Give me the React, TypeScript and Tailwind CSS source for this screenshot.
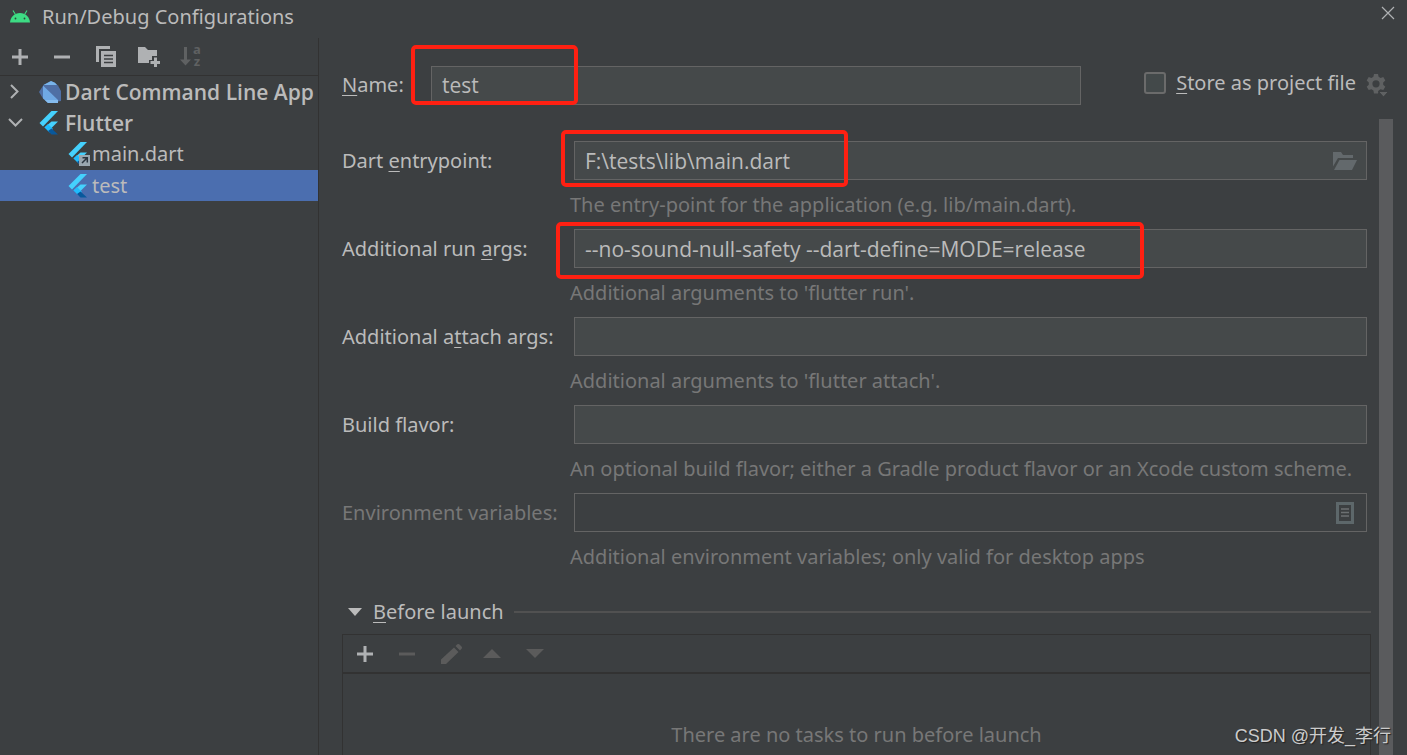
import React, { useState } from 'react';

interface FieldRow {
  id: string;
  label: React.ReactNode;
  value: string;
  hint: string;
  icon?: React.ReactNode;
  disabled?: boolean;
  mark?: string;
}

const Mnemonic = ({ children }: { children: React.ReactNode }) => (
  <span className="underline decoration-1 underline-offset-3">{children}</span>
);

const AndroidIcon = () => (
  <svg width="20" height="14" viewBox="0 0 20 14">
    <path d="M3 0.5L5.2 4M17 0.5L14.8 4" stroke="#3ddc84" strokeWidth="1.1" />
    <path d="M0 12.5C0.4 7 4.5 3 10 3s9.600 4 10 9.500z" fill="#3ddc84" />
    <circle cx="5.500" cy="8.500" r="0.900" fill="#2b4a38" />
    <circle cx="14.500" cy="8.500" r="0.900" fill="#2b4a38" />
  </svg>
);

const PlusIcon = () => (
  <svg width="16" height="16" viewBox="0 0 16 16" fill="currentColor">
    <path d="M6.500 0h3v6.500H16v3H9.500V16h-3V9.500H0v-3h6.500z" />
  </svg>
);

const MinusIcon = () => (
  <svg width="16" height="16" viewBox="0 0 16 16" fill="currentColor">
    <path d="M0 6.500h16v3H0z" />
  </svg>
);

const CopyIcon = () => (
  <svg width="20" height="21" viewBox="0 0 20 21">
    <path d="M0 0h14v3H3v13H0z" fill="#afb1b3" />
    <path d="M5 5h15v16H5z" fill="#afb1b3" />
    <path d="M8 9.500h9M8 13h9M8 16.500h9" stroke="#3c3f41" strokeWidth="1.400" />
  </svg>
);

const FolderPlusIcon = () => (
  <svg width="22" height="20" viewBox="0 0 22 20">
    <path d="M0 0h7l3 3h9v6h-5v4h-3v3H0z" fill="#afb1b3" />
    <path d="M16 10.500h3V14h3.500v3H19v3.500h-3V17h-3.500v-3H16z" fill="#afb1b3" />
  </svg>
);

const SortIcon = () => (
  <span className="flex items-center gap-[2px] text-[#5f6162]">
    <svg width="11" height="19" viewBox="0 0 11 19" fill="currentColor">
      <path d="M4 0h3v12.500h4L5.500 18.500 0 12.500h4z" />
    </svg>
    <span className="flex flex-col pb-1 text-[13px] font-bold leading-[12px]">
      <span>a</span>
      <span>z</span>
    </span>
  </span>
);

const DartIcon = () => (
  <svg className="shrink-0" width="22" height="22" viewBox="0 0 22 22">
    <path d="M4.500 4L12 0l3 1.500L19 4.500 22 10v10l-3 .5L4 17.500 0 11z" fill="#4f6fa5" />
    <path d="M4.500 4L12 0l4 1.700L18 4z" fill="#79b4ea" />
    <path d="M4 4.500L19 19v3H9l-5-4.500z" fill="#6fa8e4" />
    <path d="M6 19h13v3H9z" fill="#85bcee" />
  </svg>
);

const FlutterIcon = ({ linked }: { linked?: boolean }) => (
  <svg className="shrink-0" width="22" height="24" viewBox="0 0 22 24">
    <path d="M12.500 0H19L4 15.500.5 12z" fill="#45d1fd" />
    <path d="M12.500 10.500H19L10.500 19 5.500 16.500z" fill="#45d1fd" />
    <path d="M5.500 16.500L9 13l5 5-3.500 3.500z" fill="#1fbcfd" />
    <path d="M9 20l3.500-2.500L19 23.500h-6.500z" fill="#08589c" />
    {linked && (
      <>
        <path d="M11 13h11v11H11z" fill="#9aa7b0" />
        <path d="M14 21l5-5M14.500 15.700h4.800v4.800" fill="none" stroke="#2b3640" strokeWidth="1.500" />
      </>
    )}
  </svg>
);

const GearIcon = () => (
  <svg width="22" height="23" viewBox="0 0 22 23" fill="#5f6162">
    <path
      fillRule="evenodd"
      d="M8 0h4l.6 2.800 2 1.100 2.700-.9 2 3.400L17.200 8.500v2.300l2.100 2-2 3.300-2.700-.8-2 1.200L12 19.500H8l-.6-3-2-1.200-2.700.8-2-3.300 2.100-2V8.500L.7 6.400l2-3.400 2.700.9 2-1.100zM10 6.200a3.600 3.600 0 1 0 0 7.200 3.600 3.600 0 0 0 0-7.200z"
    />
    <path d="M12.500 17.500h10L17.500 23z" stroke="#3c3f41" strokeWidth="1" />
  </svg>
);

const OpenFolderIcon = () => (
  <svg width="24" height="18" viewBox="0 0 24 18" fill="#63696c">
    <path d="M0 0h8l2 3h10v3H5L0 14.500z" />
    <path d="M6.500 8H24l-5 10H1z" />
  </svg>
);

const ListIcon = () => (
  <svg width="18" height="22" viewBox="0 0 18 22">
    <path d="M1.500 1.500h15v19h-15z" fill="none" stroke="#5d676a" strokeWidth="3" />
    <path d="M5 7h8M5 10.500h8M5 14h8" stroke="#6c7072" strokeWidth="1.500" />
  </svg>
);

const PencilIcon = () => (
  <svg width="21" height="20" viewBox="0 0 21 20" fill="currentColor">
    <path d="M13 3.500l4.500 4.500L5 20H0v-4.500zM14.500 2L16 .5c.8-.7 1.700-.7 2.500 0L20.500 2.500c.7.8.7 1.500 0 2.300L19 6.500z" />
  </svg>
);

const Triangle = ({ up, wide }: { up?: boolean; wide?: boolean }) => (
  <svg width={wide ? 18 : 14} height={wide ? 9 : 8} viewBox="0 0 18 9" preserveAspectRatio="none" fill="currentColor">
    <path d={up ? 'M0 9L9 0l9 9z' : 'M0 0h18L9 9z'} />
  </svg>
);

const fields: FieldRow[] = [
  {
    id: 'entrypoint',
    label: <>Dart <Mnemonic>e</Mnemonic>ntrypoint:</>,
    value: 'F:\\tests\\lib\\main.dart',
    hint: 'The entry-point for the application (e.g. lib/main.dart).',
    icon: <OpenFolderIcon />,
    mark: '-left-[13px] -top-[11px] w-[287px]',
  },
  {
    id: 'run-args',
    label: <>Additional run <Mnemonic>a</Mnemonic>rgs:</>,
    value: '--no-sound-null-safety --dart-define=MODE=release',
    hint: "Additional arguments to 'flutter run'.",
    mark: '-left-[18px] -top-[7px] w-[588px]',
  },
  {
    id: 'attach-args',
    label: <>Additional a<Mnemonic>t</Mnemonic>tach args:</>,
    value: '',
    hint: "Additional arguments to 'flutter attach'.",
  },
  {
    id: 'flavor',
    label: 'Build flavor:',
    value: '',
    hint: 'An optional build flavor; either a Gradle product flavor or an Xcode custom scheme.',
  },
  {
    id: 'env',
    label: 'Environment variables:',
    value: '',
    hint: 'Additional environment variables; only valid for desktop apps',
    icon: <ListIcon />,
    disabled: true,
  },
];

const inputClass =
  "block h-[39px] w-full border border-[#646464] px-[10px] font-['Open_Sans',sans-serif] text-[21px] text-[#bbbbbb] outline-none";
const markClass = 'pointer-events-none absolute rounded-[5px] border-4 border-[#ff2012]';

const Sidebar = () => (
  <aside className="flex w-[319px] shrink-0 flex-col border-r border-[#323232]">
    <div className="flex h-[38px] shrink-0 items-center border-b border-[#323232] pl-3 text-[#afb1b3]">
      <button aria-label="Add" className="w-[42px]"><PlusIcon /></button>
      <button aria-label="Remove" className="w-[42px]"><MinusIcon /></button>
      <button aria-label="Copy" className="w-[42px]"><CopyIcon /></button>
      <button aria-label="New folder" className="w-[42px]"><FolderPlusIcon /></button>
      <button aria-label="Sort" disabled><SortIcon /></button>
    </div>
    <ul className="whitespace-nowrap pt-px">
      <li className="flex h-[31px] items-center pb-[2px]">
        <svg className="ml-2 mr-4 shrink-0" width="15" height="15" viewBox="0 0 15 15" fill="none" stroke="#afb1b3" strokeWidth="2">
          <path d="M3 1l6.500 6.500L3 14" />
        </svg>
        <DartIcon />
        <span className="ml-1 font-['Open_Sans',sans-serif] text-[21px] font-semibold">Dart Command Line App</span>
      </li>
      <li className="flex h-[31px] items-center pb-[2px]">
        <svg className="ml-2 mr-4 shrink-0" width="15" height="15" viewBox="0 0 15 15" fill="none" stroke="#afb1b3" strokeWidth="2">
          <path d="M1 4l6.500 6.500L14 4" />
        </svg>
        <FlutterIcon />
        <span className="ml-1 font-['Open_Sans',sans-serif] text-[21px] font-semibold">Flutter</span>
      </li>
      <li className="flex h-[31px] items-center pb-[2px] pl-[68px]">
        <FlutterIcon linked />
        <span className="ml-[2px]">main.dart</span>
      </li>
      <li className="flex h-[31px] items-center bg-[#4b6eaf] pl-[68px]">
        <FlutterIcon />
        <span className="ml-[2px]">test</span>
      </li>
    </ul>
  </aside>
);

const Field = ({ row }: { row: FieldRow }) => {
  const [value, setValue] = useState(row.value);

  return (
    <div className="grid h-[88px] grid-cols-[228px_minmax(0,1fr)] content-start">
      <label htmlFor={row.id} className={row.disabled ? 'self-center text-[#777777]' : 'self-center'}>
        {row.label}
      </label>
      <div className="relative mx-1">
        <input
          id={row.id}
          type="text"
          spellCheck={false}
          disabled={row.disabled}
          value={value}
          onChange={(e) => setValue(e.target.value)}
          className={`${inputClass} ${row.disabled ? 'bg-[#3c3f41]' : 'bg-[#45494a]'}`}
        />
        {row.icon && (
          <button aria-label="Browse" className="absolute inset-y-0 right-2 flex w-7 items-center justify-center">
            {row.icon}
          </button>
        )}
        {row.mark && <div className={`${markClass} h-[57px] ${row.mark}`} />}
      </div>
      <p className="col-start-2 mt-3 whitespace-nowrap text-[#777777]">{row.hint}</p>
    </div>
  );
};

export default function App() {
  const [name, setName] = useState('test');
  const [stored, setStored] = useState(false);

  return (
    <div className="relative flex h-screen flex-col overflow-hidden bg-[#3c3f41] font-['Noto_Sans','Noto_Sans_CJK_SC',sans-serif] text-[20px] leading-[26px] text-[#bbbbbb]">
      <header className="flex h-[38px] shrink-0 items-start pl-[10px] pr-3 pt-1">
        <div className="flex h-[26px] items-center">
          <AndroidIcon />
        </div>
        <h1 className="ml-3 flex-1">Run/Debug Configurations</h1>
        <button aria-label="Close" className="mt-[2px]">
          <svg width="14" height="14" viewBox="0 0 14 14" stroke="#afb1b3" strokeWidth="1.200">
            <path d="M1 1l12 12M13 1L1 13" />
          </svg>
        </button>
      </header>

      <div className="flex min-h-0 flex-1">
        <Sidebar />

        <main className="flex min-w-0 flex-1 flex-col pl-[23px]">
          <div className="flex h-[81px] shrink-0 items-center pr-[19px] pt-[13px]">
            <label htmlFor="name" className="w-[89px]"><Mnemonic>N</Mnemonic>ame:</label>
            <div className="relative flex-1">
              <input
                id="name"
                type="text"
                spellCheck={false}
                value={name}
                onChange={(e) => setName(e.target.value)}
                className={`${inputClass} bg-[#45494a]`}
              />
              <div className={`${markClass} -left-5 -top-[21px] h-[60px] w-[167px]`} />
            </div>
            <div className="ml-[63px] flex items-center pb-1">
              <input
                id="stored"
                type="checkbox"
                checked={stored}
                onChange={(e) => setStored(e.target.checked)}
                className="size-[22px] appearance-none rounded-[3px] border-2 border-[#6b6b6b] bg-[#43494a] checked:bg-[#4b6eaf]"
              />
              <label htmlFor="stored" className="ml-[10px]"><Mnemonic>S</Mnemonic>tore as project file</label>
            </div>
            <button aria-label="Storage settings" className="ml-[10px]"><GearIcon /></button>
          </div>

          <div className="flex min-h-0 flex-1 pr-[14px]">
            <div className="flex min-w-0 flex-1 flex-col pt-[22px]">
              {fields.map((row) => (
                <Field key={row.id} row={row} />
              ))}

              <section className="flex min-h-0 flex-1 flex-col pt-[18px]">
                <div className="flex items-center pl-[6px]">
                  <button aria-label="Toggle before launch"><Triangle /></button>
                  <h2 className="ml-[11px] mr-[10px]"><Mnemonic>B</Mnemonic>efore launch</h2>
                  <div className="h-[2px] flex-1 bg-[#515151]" />
                </div>
                <div className="mt-[9px] flex min-h-0 flex-1 flex-col border-x border-t border-[#323232]">
                  <div className="flex h-[39px] shrink-0 items-center border-b-2 border-[#323232] pl-[14px] text-[#5b5b5b]">
                    <button aria-label="Add task" className="w-[42px] text-[#afb1b3]"><PlusIcon /></button>
                    <button aria-label="Remove task" disabled className="w-[42px]"><MinusIcon /></button>
                    <button aria-label="Edit task" disabled className="w-[42px]"><PencilIcon /></button>
                    <button aria-label="Move up" disabled className="w-[43px]"><Triangle up wide /></button>
                    <button aria-label="Move down" disabled><Triangle wide /></button>
                  </div>
                  <p className="pt-12 text-center text-[#777777]">There are no tasks to run before launch</p>
                </div>
              </section>
            </div>
            <div className="ml-2 w-[14px] shrink-0 bg-[#5a5b5d]" />
          </div>
        </main>
      </div>

      <div className="absolute bottom-[6px] right-4 font-['Liberation_Sans','Noto_Sans_CJK_SC',sans-serif] text-[18px] text-[#cccccc] [text-shadow:1px_1px_1px_#222]">
        CSDN @开发_李行
      </div>
    </div>
  );
}
